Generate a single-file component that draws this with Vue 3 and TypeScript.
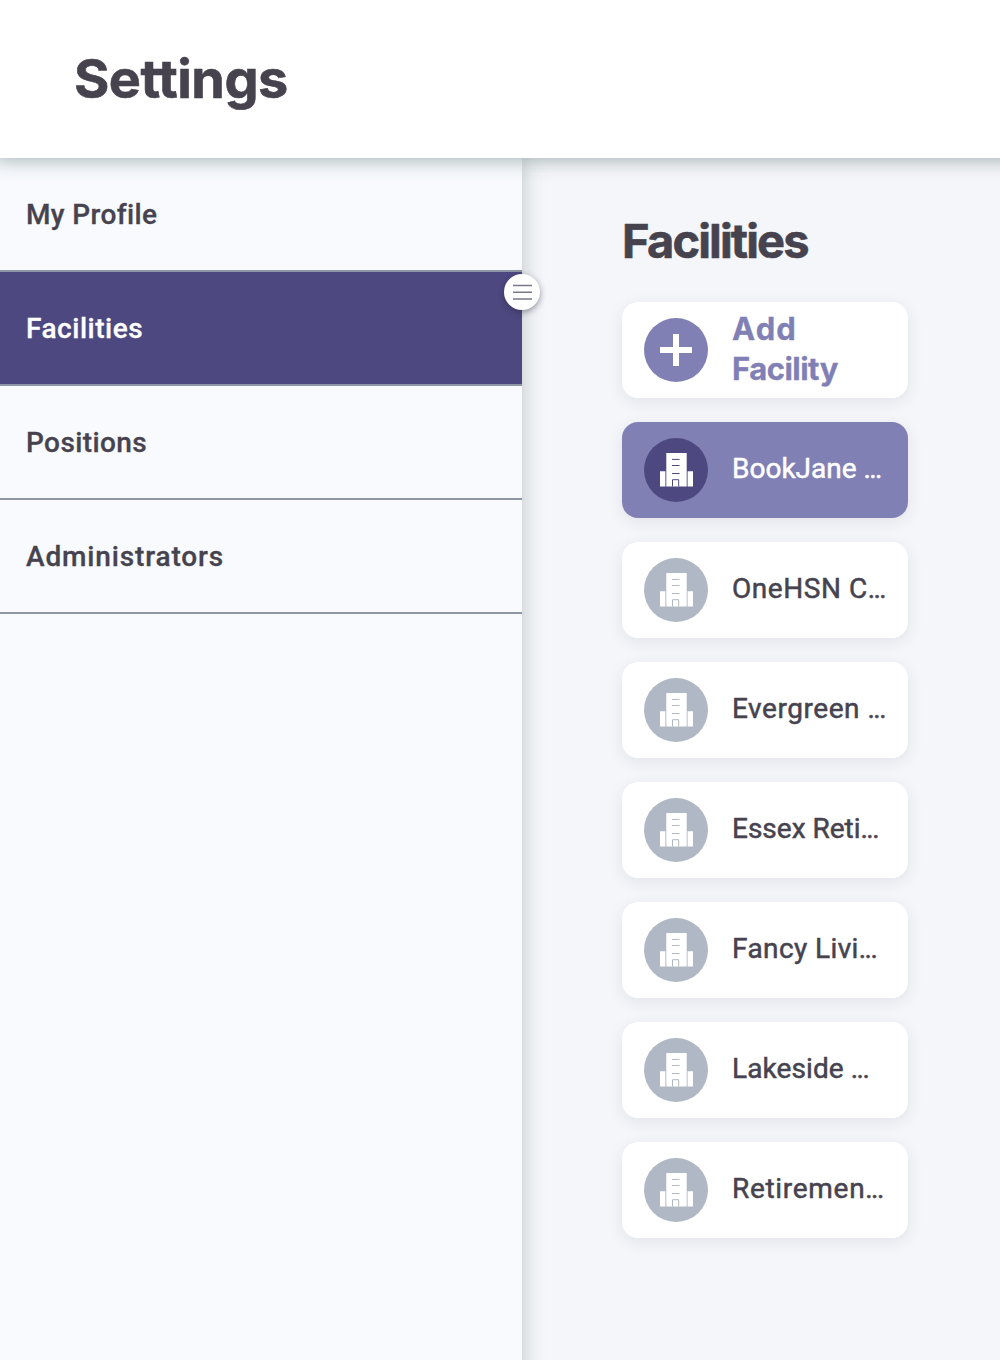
<script setup lang="ts">
interface Entry {
  label: string
  spacing: number
  active?: boolean
}

const sections: Entry[] = [
  { label: 'My Profile', spacing: 0.38 },
  { label: 'Facilities', spacing: 0.52, active: true },
  { label: 'Positions', spacing: 0.4 },
  { label: 'Administrators', spacing: 0.86 },
]

const facilities: Entry[] = [
  { label: 'BookJane ', spacing: 0, active: true },
  { label: 'OneHSN C', spacing: 0.55 },
  { label: 'Evergreen ', spacing: 0.55 },
  { label: 'Essex Reti', spacing: 0 },
  { label: 'Fancy Livi', spacing: 0.4 },
  { label: 'Lakeside ', spacing: 0.1 },
  { label: 'Retiremen', spacing: 0.7 },
]
</script>

<template>
  <div class="page">
    <header class="header">
      <h1 class="title">Settings</h1>
    </header>
    <div class="body">
      <nav class="sidebar">
        <a
          v-for="s in sections"
          :key="s.label"
          class="nav-item"
          :class="{ active: s.active }"
        ><span :style="{ letterSpacing: s.spacing + 'px' }">{{ s.label }}</span></a>
        <button class="toggle" aria-label="Toggle menu">
          <svg width="36" height="36" viewBox="0 0 36 36">
            <path d="M9 11.5h19M9 18.3h19M9 25h19" stroke="#77798a" stroke-width="1.6" fill="none" />
          </svg>
        </button>
      </nav>
      <main class="content">
        <h2 class="subtitle">Facilities</h2>
        <div class="list">
          <button class="card add">
            <svg class="icon" width="64" height="64" viewBox="0 0 64 64">
              <circle cx="32" cy="32" r="32" fill="#8080b5" />
              <path d="M16 32h32M32 16v32" stroke="#fff" stroke-width="6" />
            </svg>
            <span class="add-label"><span class="wide">Add</span><br /><span class="tight">Facility</span></span>
          </button>
          <button
            v-for="f in facilities"
            :key="f.label"
            class="card"
            :class="{ active: f.active }"
          >
            <svg class="icon" width="64" height="64" viewBox="0 0 64 64">
              <circle class="disc" cx="32" cy="32" r="32" />
              <path d="M22.3 15h20.4v33.5H22.3zM16 33.3h5.4v15.2H16zM43.6 33.3H49v15.2h-5.4z" fill="#fff" />
              <path class="detail" d="M28 21.4h7.6M28 27.5h7.6M28 35.5h7.6M28.5 48.5v-6.8h6.2v6.8" />
            </svg>
            <span class="name"><span :style="{ letterSpacing: f.spacing + 'px' }">{{ f.label }}</span><span class="dots">...</span></span>
          </button>
        </div>
      </main>
    </div>
  </div>
</template>

<style>
body {
  margin: 0;
}
</style>

<style scoped>
.page {
  width: 1000px;
  height: 1360px;
  display: flex;
  flex-direction: column;
  overflow: hidden;
  background: #f5f6fa;
  color: #46434f;
  font-family: Roboto, "Liberation Sans", sans-serif;
}
.header {
  position: relative;
  z-index: 2;
  box-sizing: border-box;
  width: 1030px;
  height: 158px;
  flex: none;
  margin-left: -6px;
  padding: 44px 0 0 80px;
  background: #fff;
  box-shadow: 0 2px 18px rgba(50, 80, 70, 0.42);
}
.title,
.subtitle {
  margin: 0;
  font-family: Inter, "Liberation Sans", sans-serif;
  font-weight: 700;
  -webkit-text-stroke: 0.6px currentColor;
}
.title {
  font-size: 54px;
  line-height: 69px;
  letter-spacing: -0.5px;
}
.body {
  flex: 1;
  display: flex;
}
.sidebar {
  position: relative;
  z-index: 1;
  width: 522px;
  height: 1240px;
  flex: none;
  background: #f8fafe;
  box-shadow: 0 0 20px rgba(50, 80, 70, 0.3);
}
.nav-item {
  box-sizing: border-box;
  height: 114px;
  display: flex;
  align-items: center;
  padding-left: 26px;
  border-bottom: 2px solid #8f96a6;
  font-size: 28px;
  font-weight: 500;
  -webkit-text-stroke: 0.3px currentColor;
}
.nav-item.active {
  background: #4d4980;
  color: #fff;
}
.toggle {
  position: absolute;
  top: 116.4px;
  right: -18px;
  width: 36px;
  height: 36px;
  padding: 0;
  border: 0;
  border-radius: 50%;
  background: #fff;
  box-shadow: 0 2px 6px rgba(30, 30, 50, 0.45);
}
.toggle svg {
  display: block;
}
.content {
  padding: 54px 0 0 100px;
}
.subtitle {
  height: 90px;
  font-size: 47px;
  line-height: 58px;
  letter-spacing: -1.85px;
}
.list {
  display: flex;
  flex-direction: column;
  gap: 24px;
}
.card {
  box-sizing: border-box;
  width: 286px;
  height: 96px;
  display: flex;
  align-items: center;
  gap: 24px;
  padding: 0 0 0 22px;
  border: 0;
  border-radius: 16px;
  background: #fff;
  color: inherit;
  font: 400 28px Roboto, "Liberation Sans", sans-serif;
  text-align: left;
  box-shadow: 0 4px 16px rgba(40, 45, 60, 0.09);
}
.card.active {
  background: #8080b5;
  color: #fff;
}
.icon {
  flex: none;
}
.disc {
  fill: #b0b8c5;
}
.detail {
  fill: none;
  stroke: #b0b8c5;
  stroke-width: 1;
}
.active .disc {
  fill: #4d4980;
}
.active .detail {
  stroke: #4d4980;
}
.name {
  white-space: pre;
  padding-bottom: 4px;
  -webkit-text-stroke: 0.5px currentColor;
}
.dots {
  letter-spacing: -1.6px;
}
.add-label {
  color: #8080b5;
  font: 700 31px/40px Inter, "Liberation Sans", sans-serif;
  padding-bottom: 3px;
  -webkit-text-stroke: 0.3px currentColor;
}
.wide {
  letter-spacing: 1.2px;
}
.tight {
  letter-spacing: -0.5px;
}
</style>
